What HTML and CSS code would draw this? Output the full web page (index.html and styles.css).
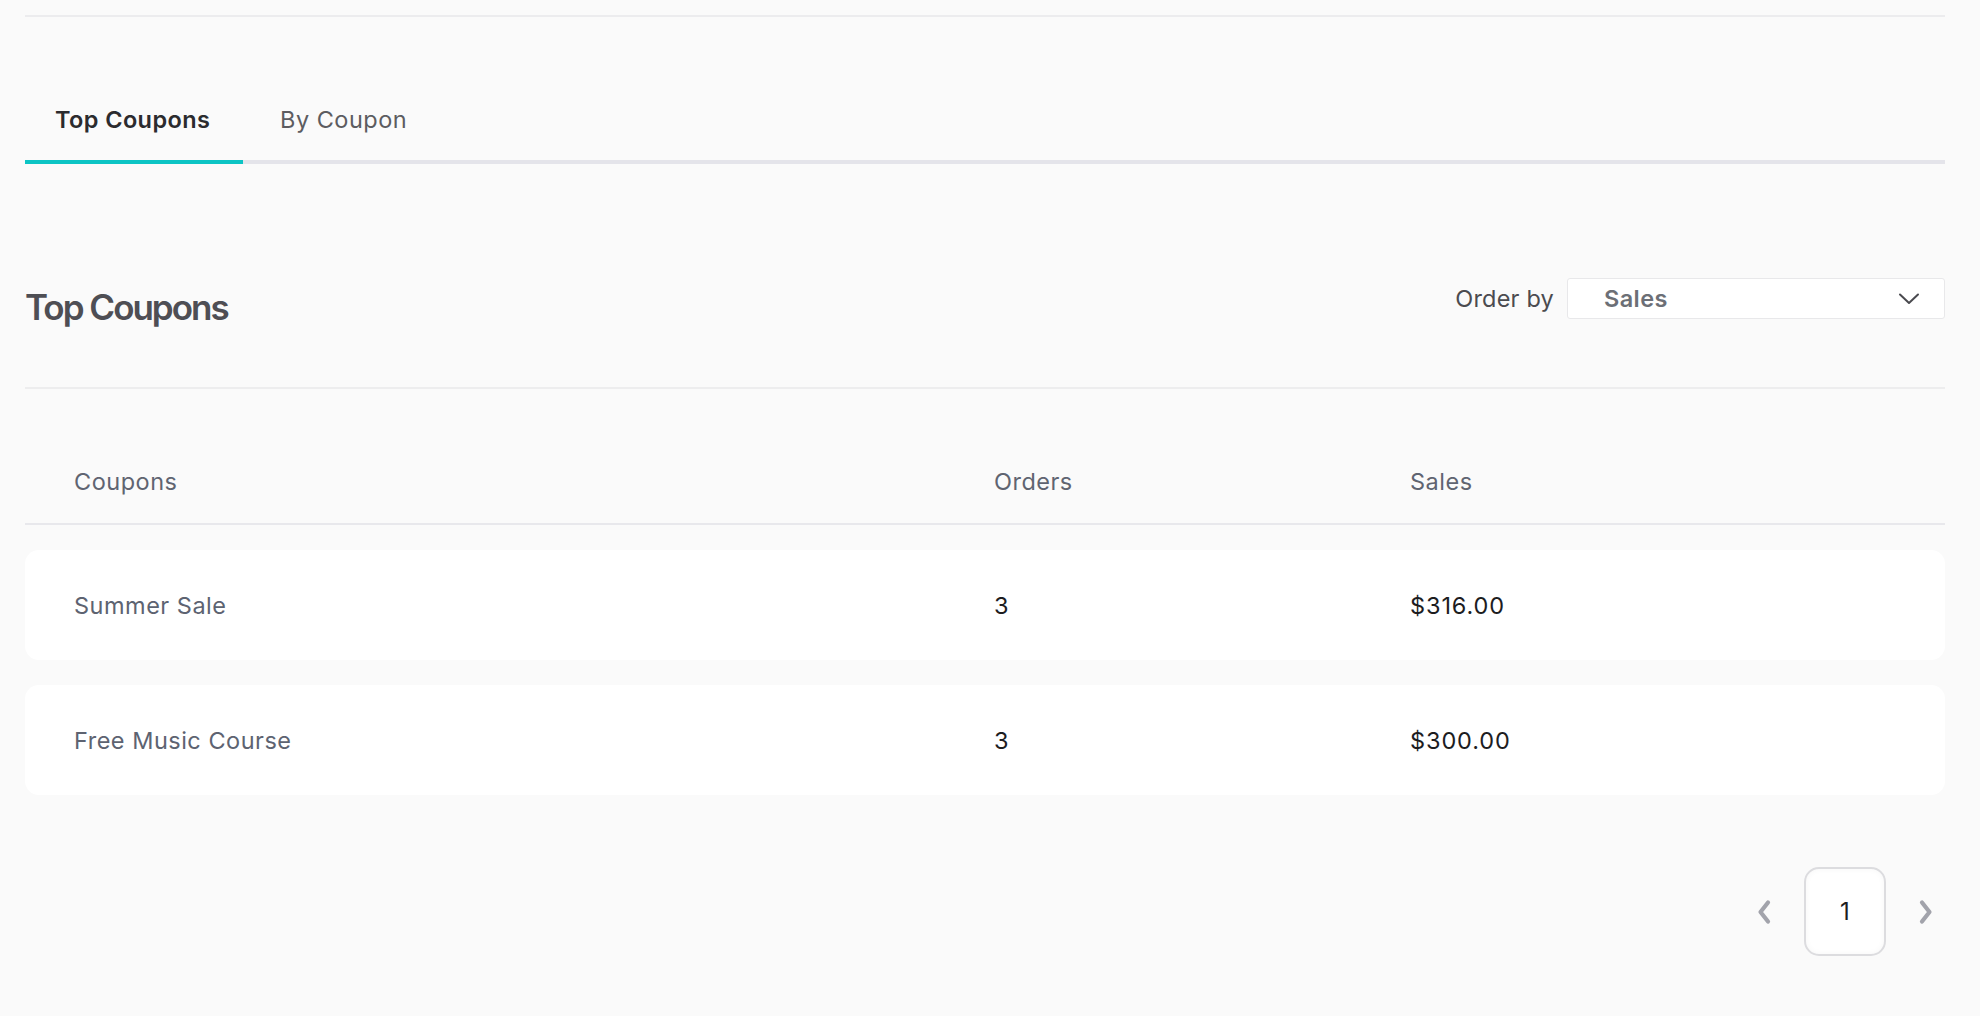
FILE: index.html
```html
<!DOCTYPE html>
<html>
<head>
<meta charset="utf-8">
<link rel="stylesheet" href="styles.css">
</head>
<body>
<div class="page">
  <div class="top-rule"></div>
  <nav class="tabs">
    <div class="tab active">Top Coupons</div>
    <div class="tab">By Coupon</div>
  </nav>
  <section class="panel">
    <header class="panel-head">
      <h2 class="title">Top Coupons</h2>
      <div class="order">
        <span class="order-label">Order by</span>
        <div class="select">
          <span class="select-value">Sales</span>
          <svg class="chev" width="22" height="14" viewBox="0 0 22 14"><path d="M2 2.5 L11 11 L20 2.5" fill="none" stroke="#4a4a4f" stroke-width="2" stroke-linecap="round" stroke-linejoin="round"/></svg>
        </div>
      </div>
    </header>
    <div class="table">
      <div class="thead">
        <div class="c1">Coupons</div>
        <div class="c2">Orders</div>
        <div class="c3">Sales</div>
      </div>
      <div class="row">
        <div class="c1 name">Summer Sale</div>
        <div class="c2 num">3</div>
        <div class="c3 num">$316.00</div>
      </div>
      <div class="row">
        <div class="c1 name">Free Music Course</div>
        <div class="c2 num">3</div>
        <div class="c3 num">$300.00</div>
      </div>
    </div>
    <div class="pager">
      <svg class="arrow" width="16" height="26" viewBox="0 0 16 26"><path d="M12 3.5 L4.5 13 L12 22.5" fill="none" stroke="#a2a3ab" stroke-width="4.2" stroke-linecap="round" stroke-linejoin="round"/></svg>
      <div class="page-btn">1</div>
      <svg class="arrow" width="16" height="26" viewBox="0 0 16 26"><path d="M4 3.5 L11.5 13 L4 22.5" fill="none" stroke="#a2a3ab" stroke-width="4.2" stroke-linecap="round" stroke-linejoin="round"/></svg>
    </div>
  </section>
</div>
</body>
</html>
```

FILE: styles.css
```css
* { box-sizing: border-box; }
html, body { margin: 0; padding: 0; }
body {
  background: #fafafa;
  font-family: Inter, "Noto Sans", sans-serif;
  width: 1980px;
  height: 1016px;
  overflow: hidden;
}
.page {
  padding: 15px 35px 0 25px;
}
.top-rule {
  height: 2px;
  background: #ececee;
}
.tabs {
  display: flex;
  margin-top: 72px;
  border-bottom: 4px solid #e4e4ea;
  height: 75px;
}
.tab {
  font-size: 23.5px;
  color: #5c5c60;
  padding: 0 30px;
  line-height: 62px;
  height: 75px;
  margin-bottom: -4px;
  border-bottom: 4px solid transparent;
  letter-spacing: 0.5px;
}
.tab.active {
  font-weight: 600;
  color: #2b2b2e;
  border-bottom-color: #0cc4c4;
  width: 218px;
  letter-spacing: 0.4px;
}
.tab + .tab { padding-left: 37px; }
.panel-head {
  display: flex;
  justify-content: space-between;
  align-items: center;
  height: 225px;
  padding-top: 62px;
  border-bottom: 2px solid #ededee;
}
.title {
  margin: 0;
  font-size: 35px;
  font-weight: 600;
  color: #4e4e54;
  letter-spacing: -2px;
}
.order {
  display: flex;
  align-items: center;
  gap: 13px;
  margin-top: -16px;
}
.order-label {
  font-size: 23.5px;
  color: #4b4b4f;
  letter-spacing: 0.2px;
}
.select {
  width: 378px;
  height: 41px;
  background: #fff;
  border: 1px solid #e8e8ea;
  border-radius: 3px;
  display: flex;
  align-items: center;
  justify-content: space-between;
  padding: 0 24px 0 36px;
}
.select-value {
  font-size: 23.5px;
  font-weight: 600;
  color: #6c6f76;
  letter-spacing: 0.4px;
}
.table { margin-top: 45px; }
.thead, .row {
  display: grid;
  grid-template-columns: 920px 416px 1fr;
  align-items: center;
  padding-left: 49px;
}
.thead {
  height: 91px;
  border-bottom: 2px solid #e8e8ec;
  font-size: 23.5px;
  color: #5f6471;
  letter-spacing: 0.5px;
  padding-top: 6px;
}
.row {
  height: 110px;
  background: #fff;
  border-radius: 14px;
  margin-top: 25px;
  font-size: 23.5px;
  letter-spacing: 0.5px;
}
.name { color: #5d6371; }
.num { color: #1d1d1f; letter-spacing: 0.9px; }
.pager {
  display: flex;
  justify-content: flex-end;
  align-items: center;
  gap: 32px;
  margin-top: 72px;
  padding-right: 11px;
}
.page-btn {
  width: 82px;
  height: 89px;
  border: 2px solid #dcdcdf;
  border-radius: 15px;
  background: #fff;
  box-shadow: inset 0 0 6px rgba(0,0,0,0.04);
  display: flex;
  align-items: center;
  justify-content: center;
  font-size: 24px;
  color: #1d1d1f;
}
```
